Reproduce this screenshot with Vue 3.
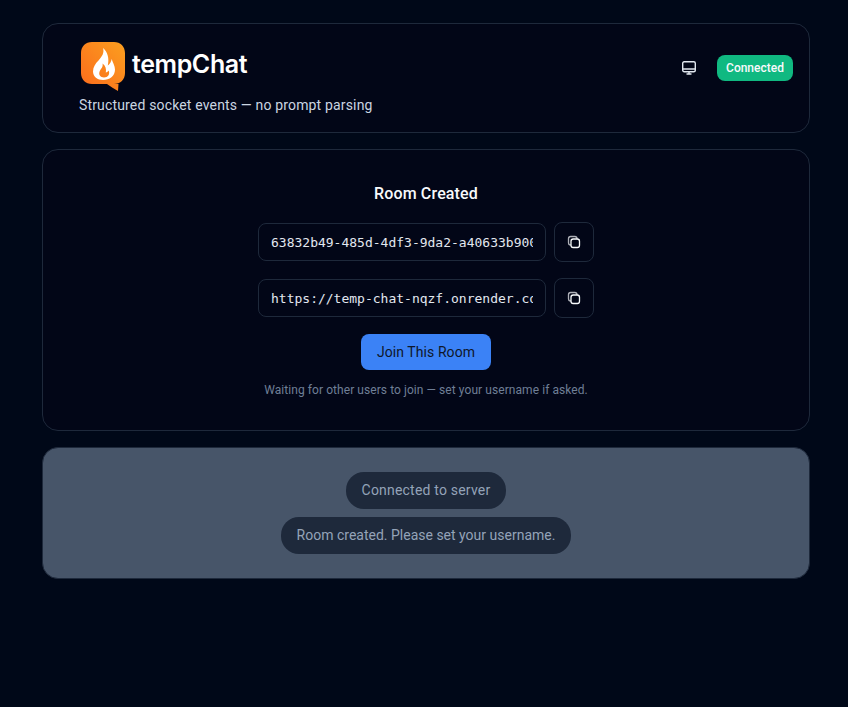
<script setup>
const messages = ['Connected to server', 'Room created. Please set your username.']
const fields = [
  '63832b49-485d-4df3-9da2-a40633b9002c',
  'https://temp-chat-nqzf.onrender.com/room/63832b49',
]
</script>

<template>
  <main class="page">
    <header class="card head">
      <div class="brand">
        <div class="logo-row">
          <svg class="logo" viewBox="0 0 44 49" width="44" height="49" aria-hidden="true">
            <defs>
              <linearGradient id="lg" x1="1" y1="0" x2="0" y2="1">
                <stop offset="0" stop-color="#fb9f1f" />
                <stop offset="1" stop-color="#fb6a1c" />
              </linearGradient>
            </defs>
            <path fill="url(#lg)" d="M11 0H33C39.5 0 44 4.500 44 11V31C44 37.500 39.500 42 33 42H37.500L37 49C34 47.500 29 44 26 42H11C4.500 42 0 37.500 0 31V11C0 4.500 4.500 0 11 0Z" />
            <path fill="#fff" fill-rule="evenodd" d="M22 6C23.500 11 21 14.500 17.500 18.500C14.500 21.500 12 25 12 29.500C12 34.500 16.500 38 22 38C28.500 38 34 34 34 27.500C34 23.500 31.500 20.500 30.700 17C30.300 19.500 28.800 22 26.800 23.500C28.500 16 26.500 10 22 6ZM21.500 21.500C22.500 25 19.500 27 18.500 29.800C17.500 33 19.500 35.500 23 35.500C27 35.500 29 32.500 27.800 28.500C27 29.700 26 30.300 24.800 30.500C25.500 27 24.500 23.500 21.500 21.500Z" />
          </svg>
          <span class="word">tempChat</span>
        </div>
        <p class="sub">Structured socket events — no prompt parsing</p>
      </div>
      <div class="status">
        <button class="ghost" type="button" aria-label="Theme">
          <svg viewBox="0 0 14 14" width="14" height="14" fill="none" stroke="currentColor" stroke-width="1.400" stroke-linecap="round" stroke-linejoin="round">
            <rect x="0.700" y="0.700" width="12.600" height="10" rx="1.500" />
            <path d="M1 8h12M5 13h4M7 10.700v2.300" />
          </svg>
        </button>
        <span class="badge">Connected</span>
      </div>
    </header>

    <section class="card room">
      <h2 class="title">Room Created</h2>
      <div v-for="field in fields" :key="field" class="field">
        <input class="value" readonly :value="field" />
        <button class="copy" type="button" aria-label="Copy">
          <svg viewBox="0 0 14 14" width="14" height="14" fill="none" stroke="currentColor" stroke-width="1.300" stroke-linejoin="round">
            <rect x="1.500" y="1.500" width="8.500" height="8.500" rx="2.200" opacity="0.700" />
            <rect x="4" y="4" width="8.500" height="8.500" rx="2.200" fill="#020617" />
          </svg>
        </button>
      </div>
      <button class="join" type="button">Join This Room</button>
      <p class="note">Waiting for other users to join — set your username if asked.</p>
    </section>

    <section class="card log">
      <div v-for="m in messages" :key="m" class="pill">{{ m }}</div>
    </section>
  </main>
</template>

<style>
html, body { margin: 0; background: #000818; }
</style>

<style scoped>
.page {
  width: 768px;
  margin-left: 42px;
  padding-top: 23px;
  display: flex;
  flex-direction: column;
  gap: 16px;
  min-height: 684px;
  font-family: Roboto, sans-serif;
  color: #f8fafc;
}
.card {
  box-sizing: border-box;
  border: 1px solid #1e293b;
  border-radius: 16px;
  background: #020617;
}
.head {
  height: 110px;
  padding: 0 16px 0 36px;
  display: flex;
  justify-content: space-between;
  align-items: center;
}
.brand { display: flex; flex-direction: column; margin-top: 1px; }
.logo-row { display: flex; align-items: flex-start; gap: 7px; padding-left: 2px; height: 49px; margin-top: 18px; }
.logo { display: block; flex: none; }
.word {
  font-family: Inter, sans-serif;
  font-weight: 600;
  font-size: 25px;
  line-height: 44px;
  letter-spacing: -0.4px;
  color: #fff;
}
.sub {
  margin: 6px 0 20px;
  font-size: 14px;
  line-height: 16px;
  letter-spacing: 0.16px;
  color: #cbd5e1;
}
.status { display: flex; align-items: center; gap: 8px; margin-top: -20px; }
.ghost {
  width: 40px;
  height: 36px;
  border: 0;
  padding: 0;
  background: transparent;
  color: #e2e8f0;
  display: flex;
  align-items: center;
  justify-content: center;
}
.badge {
  width: 76px;
  height: 26px;
  border-radius: 8px;
  background: #10b981;
  color: #f8fafc;
  font-size: 12px;
  font-weight: 500;
  display: flex;
  align-items: center;
  justify-content: center;
}
.room {
  height: 282px;
  padding-top: 32px;
  display: flex;
  flex-direction: column;
  align-items: center;
}
.title {
  margin: 0 0 16px;
  font-size: 16px;
  line-height: 24px;
  font-weight: 500;
  letter-spacing: 0.15px;
  color: #f8fafc;
}
.field {
  display: flex;
  align-items: center;
  gap: 8px;
  margin-bottom: 16px;
}
.value {
  box-sizing: border-box;
  width: 288px;
  height: 38px;
  padding: 0 12px;
  border: 1px solid #1e293b;
  border-radius: 8px;
  background: #020617;
  color: #e2e8f0;
  font-family: "DejaVu Sans Mono", monospace;
  font-size: 13px;
  outline: none;
}
.copy {
  width: 40px;
  height: 40px;
  padding: 0;
  border: 1px solid #1e293b;
  border-radius: 8px;
  background: #020617;
  color: #f8fafc;
  display: flex;
  align-items: center;
  justify-content: center;
}
.join {
  width: 130px;
  height: 36px;
  border: 0;
  border-radius: 8px;
  background: #3b82f6;
  color: #0f172a;
  font-family: inherit;
  font-size: 14px;
  letter-spacing: 0.08px;
}
.note {
  margin: 12px 0 0;
  font-size: 12px;
  line-height: 16px;
  letter-spacing: 0.07px;
  color: #6f7f96;
}
.log {
  height: 132px;
  padding-top: 24px;
  background: #475569;
  display: flex;
  flex-direction: column;
  align-items: center;
  gap: 8px;
}
.pill {
  height: 37px;
  padding: 0 16px;
  border-radius: 18px;
  background: #1e293b;
  color: #94a3b8;
  font-size: 14px;
  line-height: 37px;
}
.pill:first-child { letter-spacing: 0.2px; }
</style>
